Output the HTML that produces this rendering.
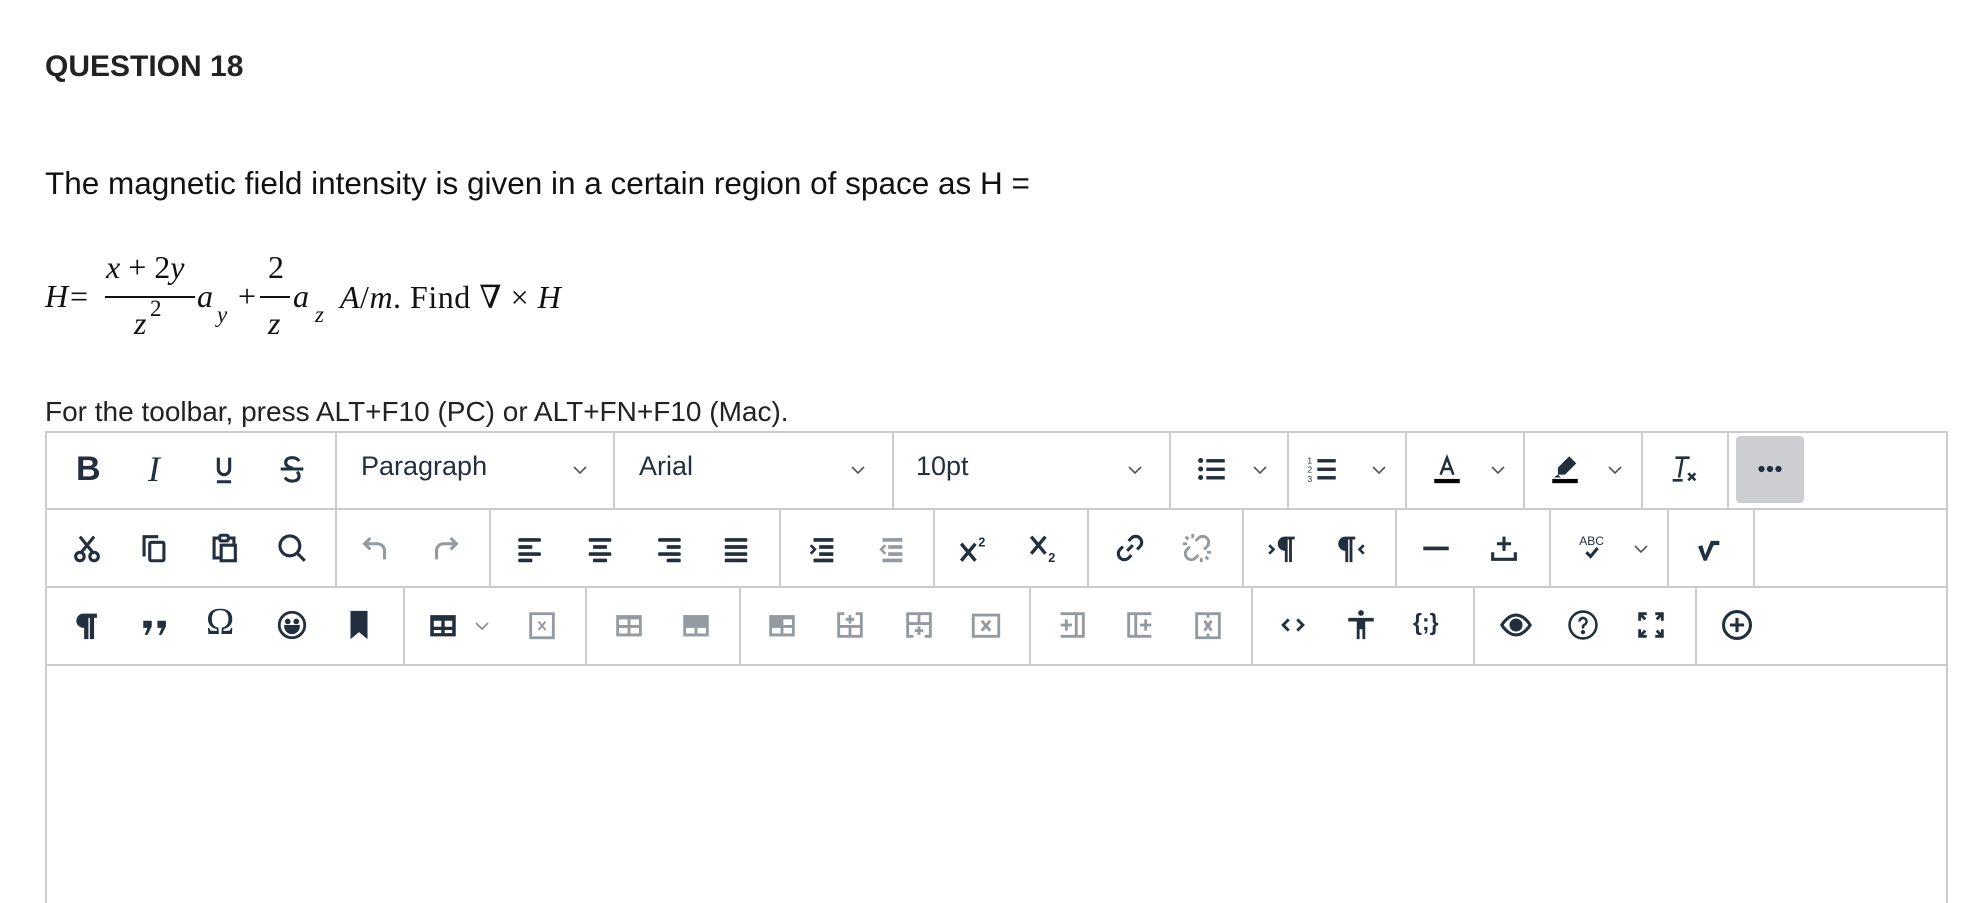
<!DOCTYPE html>
<html><head><meta charset="utf-8"><style>
body{margin:0;width:1984px;height:882px;background:#fff;position:relative;overflow:hidden;font-family:"Liberation Sans",Arial,sans-serif;color:#222}
.a{position:absolute;white-space:nowrap}
.m{font-family:"Liberation Serif","DejaVu Serif",serif;font-size:32px;color:#111}
.i{position:absolute;width:34px;height:34px}
.v{position:absolute;background:#ccc;width:2px}
.h{position:absolute;background:#ccc;height:2px}
.t{position:absolute;font-size:27px;color:#222f3e;top:451px}
.c{position:absolute;width:20px;height:20px}
</style></head><body>
<div class="a" style="left:45px;top:50px;font-size:30px;font-weight:bold;color:#222">QUESTION 18</div>
<div class="a" style="left:45px;top:165px;font-size:31.5px;color:#111">The magnetic field intensity is given in a certain region of space as H =</div>

<div class="a m" style="left:45px;top:278px;font-style:italic">H</div>
<div class="a m" style="left:70px;top:278px">=</div>
<div class="a m" style="left:106px;top:249px"><i>x</i> + 2<i>y</i></div>
<div class="h" style="left:105px;top:296px;width:90px;background:#111"></div>
<div class="a m" style="left:134px;top:305px;font-style:italic">z</div>
<div class="a m" style="left:150px;top:296px;font-size:23px">2</div>
<div class="a m" style="left:197px;top:278px;font-style:italic">a</div>
<div class="a m" style="left:217px;top:302px;font-size:23px;font-style:italic">y</div>
<div class="a m" style="left:238px;top:278px">+</div>
<div class="h" style="left:260px;top:296px;width:30px;background:#111"></div>
<div class="a m" style="left:268px;top:249px">2</div>
<div class="a m" style="left:268px;top:305px;font-style:italic">z</div>
<div class="a m" style="left:293px;top:278px;font-style:italic">a</div>
<div class="a m" style="left:315px;top:302px;font-size:23px;font-style:italic">z</div>
<div class="a m" style="left:340px;top:278px;letter-spacing:0.5px"><i>A</i>/<i>m</i>. Find ∇ × <i>H</i></div>

<div class="a" style="left:45px;top:396px;font-size:28px;color:#222">For the toolbar, press ALT+F10 (PC) or ALT+FN+F10 (Mac).</div>

<div style="position:absolute;left:45px;top:431px;width:1899px;height:470px;border:2px solid #ccc;border-bottom:none"></div>
<div class="h" style="left:45px;top:508px;width:1901px"></div>
<div class="h" style="left:45px;top:586px;width:1901px"></div>
<div class="h" style="left:45px;top:664px;width:1901px"></div>
<div class="v" style="left:335px;top:431px;height:78px"></div>
<div class="v" style="left:613px;top:431px;height:78px"></div>
<div class="v" style="left:892px;top:431px;height:78px"></div>
<div class="v" style="left:1169px;top:431px;height:78px"></div>
<div class="v" style="left:1287px;top:431px;height:78px"></div>
<div class="v" style="left:1405px;top:431px;height:78px"></div>
<div class="v" style="left:1523px;top:431px;height:78px"></div>
<div class="v" style="left:1641px;top:431px;height:78px"></div>
<div class="v" style="left:1727px;top:431px;height:78px"></div>
<div class="v" style="left:335px;top:509px;height:78px"></div>
<div class="v" style="left:489px;top:509px;height:78px"></div>
<div class="v" style="left:779px;top:509px;height:78px"></div>
<div class="v" style="left:933px;top:509px;height:78px"></div>
<div class="v" style="left:1087px;top:509px;height:78px"></div>
<div class="v" style="left:1242px;top:509px;height:78px"></div>
<div class="v" style="left:1395px;top:509px;height:78px"></div>
<div class="v" style="left:1549px;top:509px;height:78px"></div>
<div class="v" style="left:1667px;top:509px;height:78px"></div>
<div class="v" style="left:1753px;top:509px;height:78px"></div>
<div class="v" style="left:403px;top:587px;height:78px"></div>
<div class="v" style="left:585px;top:587px;height:78px"></div>
<div class="v" style="left:739px;top:587px;height:78px"></div>
<div class="v" style="left:1029px;top:587px;height:78px"></div>
<div class="v" style="left:1251px;top:587px;height:78px"></div>
<div class="v" style="left:1473px;top:587px;height:78px"></div>
<div class="v" style="left:1695px;top:587px;height:78px"></div>

<!-- ROW 1 -->
<div class="t" style="left:76px;font-weight:bold;font-size:34px;top:450px">B</div>
<div class="t" style="left:148px;font-style:italic;font-family:'Liberation Serif',serif;font-size:36px;top:448px">I</div>
<svg class="i" style="left:207px;top:452px" viewBox="0 0 24 24" fill="none" stroke="#222f3e" stroke-width="2.2"><path d="M8 4v8a4 4 0 0 0 8 0V4M7 21h10"/></svg>
<svg class="i" style="left:275px;top:452px" viewBox="0 0 24 24" fill="none" stroke="#222f3e" stroke-width="2.2"><path d="M17 6.5C16 4.5 14 4 12 4 9 4 7.5 5.5 7.5 7.5c0 3 4 3.5 5 4M4 12h16M15.5 14c1 .8 1.5 1.7 1.5 3 0 2.5-2.2 3.5-5 3.5-2.3 0-4-1-5-2.5"/></svg>
<div class="t" style="left:361px">Paragraph</div>
<svg class="c" style="left:570px;top:460px" viewBox="0 0 20 20" fill="none" stroke="#555" stroke-width="1.6"><path d="M4 7l6 6 6-6"/></svg>
<div class="t" style="left:639px">Arial</div>
<svg class="c" style="left:848px;top:460px" viewBox="0 0 20 20" fill="none" stroke="#555" stroke-width="1.6"><path d="M4 7l6 6 6-6"/></svg>
<div class="t" style="left:916px">10pt</div>
<svg class="c" style="left:1125px;top:460px" viewBox="0 0 20 20" fill="none" stroke="#555" stroke-width="1.6"><path d="M4 7l6 6 6-6"/></svg>
<svg class="i" style="left:1195px;top:452px" viewBox="0 0 24 24" fill="#222f3e"><circle cx="4" cy="6" r="1.8"/><circle cx="4" cy="12" r="1.8"/><circle cx="4" cy="18" r="1.8"/><rect x="8" y="5" width="13" height="2.4"/><rect x="8" y="11" width="13" height="2.4"/><rect x="8" y="17" width="13" height="2.4"/></svg>
<svg class="c" style="left:1250px;top:460px" viewBox="0 0 20 20" fill="none" stroke="#555" stroke-width="1.6"><path d="M4 7l6 6 6-6"/></svg>
<svg class="i" style="left:1306px;top:452px" viewBox="0 0 24 24" fill="#222f3e"><text x="1" y="8" font-size="6" font-family="Liberation Sans">1</text><text x="1" y="14.5" font-size="6" font-family="Liberation Sans">2</text><text x="1" y="21" font-size="6" font-family="Liberation Sans">3</text><rect x="8" y="5" width="13" height="2.4"/><rect x="8" y="11" width="13" height="2.4"/><rect x="8" y="17" width="13" height="2.4"/></svg>
<svg class="c" style="left:1369px;top:460px" viewBox="0 0 20 20" fill="none" stroke="#555" stroke-width="1.6"><path d="M4 7l6 6 6-6"/></svg>
<svg class="i" style="left:1430px;top:452px" viewBox="0 0 24 24"><path d="M7.5 16L12 4l4.5 12M9 12h6" fill="none" stroke="#222f3e" stroke-width="1.8"/><rect x="3" y="19" width="18" height="3" fill="#000"/></svg>
<svg class="c" style="left:1488px;top:460px" viewBox="0 0 20 20" fill="none" stroke="#555" stroke-width="1.6"><path d="M4 7l6 6 6-6"/></svg>
<svg class="i" style="left:1548px;top:452px" viewBox="0 0 24 24"><path d="M15 3l5 5-8 8H7v-5z" fill="#222f3e"/><path d="M7 16l-3 2h5z" fill="#222f3e"/><rect x="3" y="19" width="18" height="3" fill="#000"/></svg>
<svg class="c" style="left:1605px;top:460px" viewBox="0 0 20 20" fill="none" stroke="#555" stroke-width="1.6"><path d="M4 7l6 6 6-6"/></svg>
<svg class="i" style="left:1667px;top:452px" viewBox="0 0 24 24" fill="none" stroke="#222f3e" stroke-width="1.8"><path d="M6 4h10M11 4l-2.5 14M4 20h7M15 15l5 5M20 15l-5 5" /></svg>
<div style="position:absolute;left:1736px;top:436px;width:68px;height:67px;background:#ccced1;border-radius:4px"></div>
<svg class="i" style="left:1753px;top:452px" viewBox="0 0 24 24" fill="#222f3e"><circle cx="6" cy="12" r="2.2"/><circle cx="12" cy="12" r="2.2"/><circle cx="18" cy="12" r="2.2"/></svg>

<!-- ROW 2 -->
<svg class="i" style="left:70px;top:531px" viewBox="0 0 24 24" fill="none" stroke="#222f3e" stroke-width="2.2"><path d="M7 4l9 11M17 4L8 15"/><circle cx="7" cy="18" r="3"/><circle cx="17" cy="18" r="3"/></svg>
<svg class="i" style="left:137px;top:531px" viewBox="0 0 24 24" fill="none" stroke="#222f3e" stroke-width="2.2"><path d="M5 18V4h10"/><rect x="9" y="8" width="10" height="13" rx="1"/></svg>
<svg class="i" style="left:207px;top:531px" viewBox="0 0 24 24" fill="none" stroke="#222f3e" stroke-width="2.2"><path d="M9 19H5V5h3M16 5h3v4"/><rect x="9" y="3" width="6" height="4" rx="1"/><rect x="10" y="10" width="10" height="11"/></svg>
<svg class="i" style="left:275px;top:531px" viewBox="0 0 24 24" fill="none" stroke="#222f3e" stroke-width="2.2"><circle cx="10.5" cy="10.5" r="7"/><path d="M15.5 15.5L21 21"/></svg>
<svg class="i" style="left:359px;top:531px" viewBox="0 0 24 24" fill="none" stroke="#939aa2" stroke-width="2.2"><path d="M8 5L4 9l4 4M4 9h9a5 5 0 0 1 5 5v6"/></svg>
<svg class="i" style="left:428px;top:531px" viewBox="0 0 24 24" fill="none" stroke="#939aa2" stroke-width="2.2"><path d="M16 5l4 4-4 4M20 9h-9a5 5 0 0 0-5 5v6"/></svg>
<svg class="i" style="left:514px;top:531px" viewBox="0 0 24 24" fill="#222f3e"><rect x="3" y="5" width="16" height="2.6" rx="1"/><rect x="3" y="10" width="10" height="2.6" rx="1"/><rect x="3" y="15" width="16" height="2.6" rx="1"/><rect x="3" y="19.5" width="10" height="2.6" rx="1"/></svg>
<svg class="i" style="left:583px;top:531px" viewBox="0 0 24 24" fill="#222f3e"><rect x="4" y="5" width="16" height="2.6" rx="1"/><rect x="7" y="10" width="10" height="2.6" rx="1"/><rect x="4" y="15" width="16" height="2.6" rx="1"/><rect x="7" y="19.5" width="10" height="2.6" rx="1"/></svg>
<svg class="i" style="left:651px;top:531px" viewBox="0 0 24 24" fill="#222f3e"><rect x="5" y="5" width="16" height="2.6" rx="1"/><rect x="11" y="10" width="10" height="2.6" rx="1"/><rect x="5" y="15" width="16" height="2.6" rx="1"/><rect x="11" y="19.5" width="10" height="2.6" rx="1"/></svg>
<svg class="i" style="left:719px;top:531px" viewBox="0 0 24 24" fill="#222f3e"><rect x="4" y="5" width="16" height="2.6" rx="1"/><rect x="4" y="10" width="16" height="2.6" rx="1"/><rect x="4" y="15" width="16" height="2.6" rx="1"/><rect x="4" y="19.5" width="16" height="2.6" rx="1"/></svg>
<svg class="i" style="left:805px;top:531px" viewBox="0 0 24 24" fill="#222f3e"><rect x="6" y="5" width="14" height="2.6"/><rect x="10" y="10" width="10" height="2.6"/><rect x="10" y="15" width="10" height="2.6"/><rect x="6" y="19.5" width="14" height="2.6"/><path d="M4 10l3 3-3 3" fill="none" stroke="#222f3e" stroke-width="1.8"/></svg>
<svg class="i" style="left:874px;top:531px" viewBox="0 0 24 24" fill="#939aa2"><rect x="6" y="5" width="14" height="2.6"/><rect x="10" y="10" width="10" height="2.6"/><rect x="10" y="15" width="10" height="2.6"/><rect x="6" y="19.5" width="14" height="2.6"/><path d="M8 10l-3 3 3 3" fill="none" stroke="#939aa2" stroke-width="1.8"/></svg>
<svg class="i" style="left:957px;top:531px" viewBox="0 0 24 24" fill="none" stroke="#222f3e" stroke-width="2.4"><path d="M3 9l10 12M13 9L3 21"/><text x="15" y="11" font-size="9" fill="#222f3e" stroke="none" font-family="Liberation Sans" font-weight="bold">2</text></svg>
<svg class="i" style="left:1027px;top:531px" viewBox="0 0 24 24" fill="none" stroke="#222f3e" stroke-width="2.4"><path d="M3 4l10 12M13 4L3 16"/><text x="15" y="22" font-size="9" fill="#222f3e" stroke="none" font-family="Liberation Sans" font-weight="bold">2</text></svg>
<svg class="i" style="left:1113px;top:531px" viewBox="0 0 24 24" fill="none" stroke="#222f3e" stroke-width="2.2"><path d="M10 14l4-4M11 7l2-2a4 4 0 0 1 6 6l-2 2M13 17l-2 2a4 4 0 0 1-6-6l2-2"/></svg>
<svg class="i" style="left:1180px;top:531px" viewBox="0 0 24 24" fill="none" stroke="#939aa2" stroke-width="2"><path d="M11 7l2-2a4 4 0 0 1 6 6l-2 2M13 17l-2 2a4 4 0 0 1-6-6l2-2M4 4l2 2M9 2v3M2 9h3M20 20l-2-2M15 22v-3M22 15h-3"/></svg>
<svg class="i" style="left:1265px;top:531px" viewBox="0 0 24 24" fill="#222f3e"><path d="M13 4h8v2h-2v16h-2V6h-1v16h-2v-8a5 5 0 0 1 0-10z"/><path d="M3 10l3 3-3 3" fill="none" stroke="#222f3e" stroke-width="1.8"/></svg>
<svg class="i" style="left:1334px;top:531px" viewBox="0 0 24 24" fill="#222f3e"><path d="M7 4h8v2h-2v16h-2V6h-1v16H8v-8a5 5 0 0 1 0-10z"/><path d="M21 10l-3 3 3 3" fill="none" stroke="#222f3e" stroke-width="1.8"/></svg>
<svg class="i" style="left:1419px;top:531px" viewBox="0 0 24 24" fill="#222f3e"><rect x="3" y="11" width="18" height="2.6"/></svg>
<svg class="i" style="left:1487px;top:531px" viewBox="0 0 24 24" fill="none" stroke="#222f3e" stroke-width="2.2"><path d="M12 4v10M7 9h10M4 15v5h16v-5"/></svg>
<svg class="i" style="left:1575px;top:531px" viewBox="0 0 24 24" fill="#222f3e"><text x="3" y="10" font-size="8.5" font-family="Liberation Sans">ABC</text><path d="M8 15l3 3 5-6" fill="none" stroke="#222f3e" stroke-width="2.2"/></svg>
<svg class="c" style="left:1631px;top:539px" viewBox="0 0 20 20" fill="none" stroke="#555" stroke-width="1.6"><path d="M4 7l6 6 6-6"/></svg>
<svg class="i" style="left:1691px;top:531px" viewBox="0 0 24 24" fill="#222f3e"><path d="M5 11l3-1 2 7 4-10h6v3h-4l-5 11h-2z"/></svg>

<!-- ROW 3 -->
<svg class="i" style="left:70px;top:608px" viewBox="0 0 24 24" fill="#222f3e"><path d="M9 4h10v3h-2v15h-3V7h-1v15h-3v-8a5 5 0 0 1-1-10z"/></svg>
<svg class="i" style="left:139px;top:608px" viewBox="0 0 24 24" fill="#222f3e"><path d="M3 9h6v4l-3 6H4l2-5H3zM13 9h6v4l-3 6h-2l2-5h-3z"/></svg>
<div class="a" style="left:206px;top:600px;font-family:'Liberation Serif',serif;font-size:38px;color:#222f3e">Ω</div>
<svg class="i" style="left:275px;top:608px" viewBox="0 0 24 24" fill="none" stroke="#222f3e" stroke-width="2"><circle cx="12" cy="12" r="9"/><circle cx="9" cy="9.5" r="1" fill="#222f3e"/><circle cx="15" cy="9.5" r="1" fill="#222f3e"/><path d="M7.5 13h9a4.5 4.5 0 0 1-9 0z" fill="#222f3e"/></svg>
<svg class="i" style="left:342px;top:608px" viewBox="0 0 24 24" fill="#222f3e"><path d="M6 2h12v20l-6-5-6 5z"/></svg>
<svg class="i" style="left:426px;top:608px" viewBox="0 0 24 24" fill="#222f3e"><path d="M3 5h18v15H3zM5.5 9v4.2h5.3V9zm7.7 0v4.2h5.3V9zm-7.7 6.5v2.2h5.3v-2.2zm7.7 0v2.2h5.3v-2.2z" fill-rule="evenodd"/></svg>
<svg class="c" style="left:472px;top:616px" viewBox="0 0 20 20" fill="none" stroke="#888" stroke-width="1.6"><path d="M4 7l6 6 6-6"/></svg>
<svg class="i" style="left:525px;top:608px" viewBox="0 0 24 24" fill="none" stroke="#939aa2" stroke-width="2"><rect x="4" y="4" width="16" height="17"/><path d="M9.5 9.5l5 6M14.5 9.5l-5 6" stroke-width="1.4"/></svg>
<svg class="i" style="left:612px;top:608px" viewBox="0 0 24 24" fill="#939aa2"><path d="M3 5h18v15H3zM5 8v4h6V8zm8 0v4h6V8zm-8 6v4h6v-4zm8 0v4h6v-4z" fill-rule="evenodd"/></svg>
<svg class="i" style="left:679px;top:608px" viewBox="0 0 24 24" fill="#939aa2"><path d="M3 5h18v15H3zM5 14v4h6v-4zm8 0v4h6v-4z" fill-rule="evenodd"/></svg>
<svg class="i" style="left:765px;top:608px" viewBox="0 0 24 24" fill="#939aa2"><path d="M3 5h18v15H3zM13 8v4h6V8zm-8 6v4h6v-4zm8 0v4h6v-4z" fill-rule="evenodd"/></svg>
<svg class="i" style="left:833px;top:608px" viewBox="0 0 24 24" fill="none" stroke="#939aa2" stroke-width="2"><path d="M8 4H4v16h16V4h-4M4 13h16M12 13v7M12 5v6M9 8h6"/></svg>
<svg class="i" style="left:902px;top:608px" viewBox="0 0 24 24" fill="none" stroke="#939aa2" stroke-width="2"><path d="M8 20H4V4h16v16h-4M4 11h16M12 4v7M12 13v6M9 16h6"/></svg>
<svg class="i" style="left:969px;top:608px" viewBox="0 0 24 24" fill="none" stroke="#939aa2" stroke-width="2"><rect x="3" y="5" width="18" height="15"/><path d="M9 9l6 7M15 9l-6 7"/></svg>
<svg class="i" style="left:1055px;top:608px" viewBox="0 0 24 24" fill="none" stroke="#939aa2" stroke-width="2"><path d="M4 4h16v16H4M15 4v16M4 12h8M8 8v8"/></svg>
<svg class="i" style="left:1123px;top:608px" viewBox="0 0 24 24" fill="none" stroke="#939aa2" stroke-width="2"><path d="M20 4H4v16h16M9 4v16M12 12h8M16 8v8"/></svg>
<svg class="i" style="left:1191px;top:608px" viewBox="0 0 24 24" fill="none" stroke="#939aa2" stroke-width="2"><path d="M4 4h16v17H4zM9.5 9l5 7M14.5 9l-5 7M12 4v3M12 18v3"/></svg>
<svg class="i" style="left:1276px;top:608px" viewBox="0 0 24 24" fill="none" stroke="#222f3e" stroke-width="2"><path d="M9 8l-4 4 4 4M15 8l4 4-4 4"/></svg>
<svg class="i" style="left:1344px;top:608px" viewBox="0 0 24 24" fill="#222f3e"><circle cx="12" cy="3.5" r="2"/><path d="M3 7h18v2.5h-6V22h-2v-7h-2v7H9V9.5H3z"/></svg>
<div class="a" style="left:1413px;top:609px;font-size:23px;font-weight:bold;color:#222f3e">{;}</div>
<svg class="i" style="left:1499px;top:608px" viewBox="0 0 24 24" fill="none" stroke="#222f3e" stroke-width="2.2"><path d="M2 12s4-7 10-7 10 7 10 7-4 7-10 7S2 12 2 12z"/><circle cx="12" cy="12" r="3.5" fill="#222f3e"/></svg>
<svg class="i" style="left:1566px;top:608px" viewBox="0 0 24 24" fill="none" stroke="#222f3e" stroke-width="1.8"><circle cx="12" cy="12" r="9.5"/><path d="M9.5 9.5a2.5 2.5 0 1 1 3.5 2.3c-.8.4-1 1-1 2v.7"/><circle cx="12" cy="17" r=".6" fill="#222f3e"/></svg>
<svg class="i" style="left:1634px;top:608px" viewBox="0 0 24 24" fill="none" stroke="#222f3e" stroke-width="2"><path d="M4 9V4h5M4 4l4 4M20 9V4h-5M20 4l-4 4M4 15v5h5M4 20l4-4M20 15v5h-5M20 20l-4-4"/></svg>
<svg class="i" style="left:1720px;top:608px" viewBox="0 0 24 24" fill="none" stroke="#222f3e" stroke-width="2.2"><circle cx="12" cy="12" r="9.5"/><path d="M12 7v10M7 12h10"/></svg>
</body></html>
